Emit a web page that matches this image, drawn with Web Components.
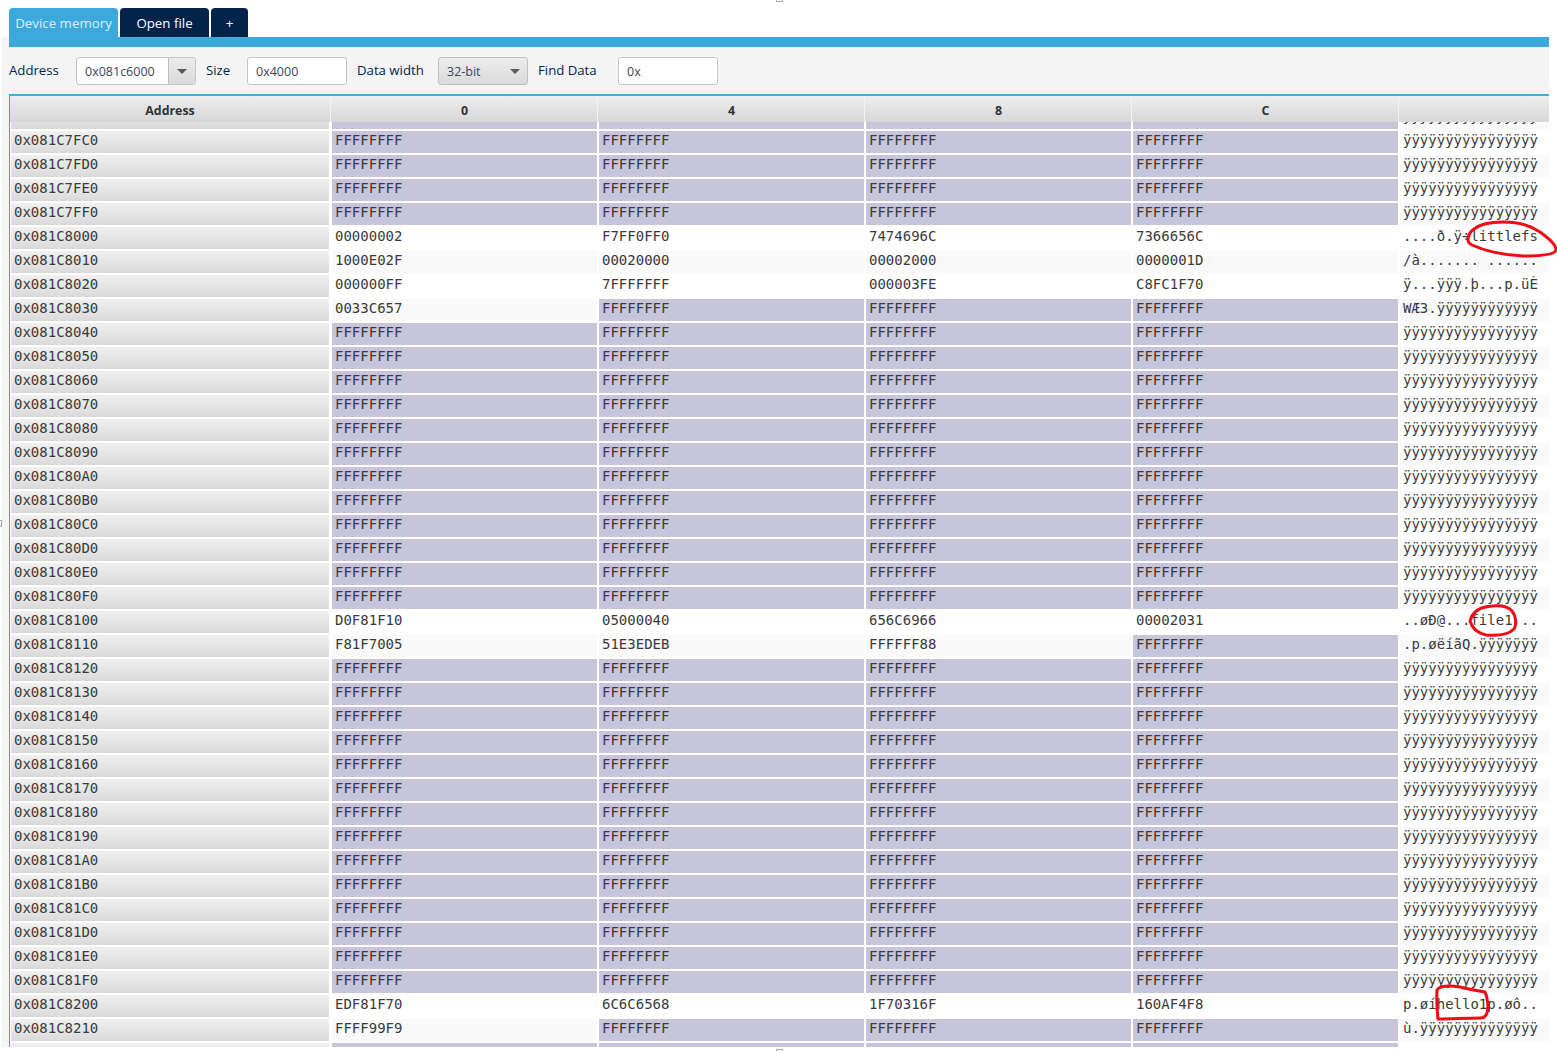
<!DOCTYPE html>
<html lang="en">
<head>
<meta charset="utf-8">
<title>Device memory</title>
<style>
html,body{margin:0;padding:0;background:#fff;height:100%;overflow:hidden}
body{font-family:"Open Sans","Noto Sans",sans-serif;color:#03234b}
</style>
</head>
<body>
<memory-app>
  <tab-bar>
    <tab-item active w="109">Device memory</tab-item>
    <tab-item w="89">Open file</tab-item>
    <tab-item w="37">+</tab-item>
  </tab-bar>
  <tool-bar>
    <tool-label w="67">Address</tool-label>
    <combo-field value="0x081c6000"></combo-field>
    <tool-label w="41">Size</tool-label>
    <text-field value="0x4000"></text-field>
    <tool-label w="81">Data width</tool-label>
    <select-field value="32-bit"></select-field>
    <tool-label w="80">Find Data</tool-label>
    <text-field value="0x"></text-field>
  </tool-bar>
  <memory-table></memory-table>
</memory-app>
<script>
const tpl = (css, html) => { const t = document.createElement('template'); t.innerHTML = `<style>${css}</style>${html}`; return t; };
const define = (name, t, setup) => customElements.define(name, class extends HTMLElement {
  constructor(){ super(); this.attachShadow({mode:'open'}).appendChild(t.content.cloneNode(true)); }
  connectedCallback(){ if (setup) setup(this, this.shadowRoot); }
});

define('memory-app', tpl(`
  :host{display:block;position:relative;width:1557px;height:1051px;overflow:hidden;background:#fff}
  .panel{display:flex;flex-direction:column;margin:8px 8px 0 2px;height:1039px}
  .marks{position:absolute;left:0;top:0;pointer-events:none}
  .h{position:absolute;box-sizing:border-box;border:1px solid #a9a9a9;background:#fff}
`, `
  <div class="panel"><slot></slot></div>
  <div class="h" style="left:776px;top:-5px;width:7px;height:7px"></div>
  <div class="h" style="left:776px;top:1049px;width:7px;height:7px"></div>
  <div class="h" style="left:-5px;top:520px;width:7px;height:7px"></div>
  <svg class="marks" width="1557" height="1051" fill="none" stroke="#f20a14" stroke-width="3" stroke-linecap="round" stroke-linejoin="round">
    <path d="M1468 240C1468 235 1471 231 1474 229C1479 225 1490 222 1503 222C1515 222 1530 225 1540 232C1548 238 1556 244 1556 250C1555 255 1540 256 1523 256C1505 255 1485 251 1472 245C1470 244 1468 242 1468 240Z"/>
    <path d="M1470 621C1472 613 1478 608 1488 606.500C1498 605 1508 606 1512 611C1516 616 1517 624 1514 629C1509 634 1498 636 1486 635C1477 633 1472 628 1470 621Z"/>
    <path d="M1437 990C1440 986 1450 985.500 1460 987C1468 989 1479 991 1485 992C1488 998 1488.500 1008 1487 1013C1486 1016 1483 1018 1480 1018C1465 1018.500 1450 1018.500 1438 1019C1437 1010 1436.500 1000 1437 990Z"/>
  </svg>
`));

define('tab-bar', tpl(`
  :host{display:flex;gap:2px;height:29px;padding-left:7px;flex:none}
`, `<slot></slot>`));

define('tab-item', tpl(`
  :host{display:flex;align-items:center;justify-content:center;box-sizing:border-box;height:29px;border-radius:4px 4px 0 0;padding-top:1px;
    background:#03234b;color:#fff;font-size:13.3px;line-height:28px;white-space:nowrap}
  :host([active]){background:#3ca8dc;color:#d9f0fb}
`, `<slot></slot>`), (el) => { el.style.width = el.getAttribute('w') + 'px'; });

define('tool-bar', tpl(`
  :host{display:block;flex:none;background:#f4f4f4;height:57px}
  .stripe{height:10px;margin-left:7px;background:#3ca8dc}
  .items{display:flex;align-items:flex-start;padding:10px 0 0 7px}
  ::slotted(*){flex:none}
`, `<div class="stripe"></div><div class="items"><slot></slot></div>`));

define('tool-label', tpl(`
  :host{display:block;box-sizing:border-box;height:28px;font-size:13.2px;line-height:26px;color:#03234b;white-space:nowrap}
`, `<slot></slot>`), (el) => { el.style.width = el.getAttribute('w') + 'px'; });

const fieldCss = `
  .v{font-size:12.5px;line-height:28px;color:#3a4658;white-space:nowrap}
  .arrow{width:0;height:0;border-left:5px solid transparent;border-right:5px solid transparent;border-top:5px solid #5a5a5a}
`;
define('text-field', tpl(`
  :host{display:block;box-sizing:border-box;width:100px;height:28px;margin-right:10px;background:#fff;border:1px solid #c4c4c4;border-radius:3px;padding-left:8px}
  ${fieldCss}
  .v{line-height:27px}
`, `<div class="v"></div>`), (el, r) => { r.querySelector('.v').textContent = el.getAttribute('value'); });

define('combo-field', tpl(`
  :host{display:flex;box-sizing:border-box;width:120px;height:28px;margin-right:10px;background:#fff;border:1px solid #c4c4c4;border-radius:3px;overflow:hidden}
  ${fieldCss}
  .v{flex:1;padding-left:8px;line-height:27px}
  .b{flex:none;width:26px;display:flex;align-items:center;justify-content:center;border-left:1px solid #bdbdbd;background:linear-gradient(#ececec,#d9d9d9)}
`, `<div class="v"></div><div class="b"><div class="arrow"></div></div>`), (el, r) => { r.querySelector('.v').textContent = el.getAttribute('value'); });

define('select-field', tpl(`
  :host{display:flex;align-items:center;justify-content:space-between;box-sizing:border-box;width:90px;height:28px;margin-right:10px;
    background:linear-gradient(#ececec,#dadada);border:1px solid #c0c0c0;border-radius:3px;padding:0 7px 0 8px}
  ${fieldCss}
  .v{line-height:27px}
`, `<div class="v"></div><div class="arrow"></div>`), (el, r) => { r.querySelector('.v').textContent = el.getAttribute('value'); });

const F = 'FFFFFFFF';
const special = {
  '081C8000':['00000002','F7FF0FF0','7474696C','7366656C'],
  '081C8010':['1000E02F','00020000','00002000','0000001D'],
  '081C8020':['000000FF','7FFFFFFF','000003FE','C8FC1F70'],
  '081C8030':['0033C657',F,F,F],
  '081C8100':['D0F81F10','05000040','656C6966','00002031'],
  '081C8110':['F81F7005','51E3EDEB','FFFFFF88',F],
  '081C8200':['EDF81F70','6C6C6568','1F70316F','160AF4F8'],
  '081C8210':['FFFF99F9',F,F,F],
};
const ascii = words => words.map(w => {
  let s = '';
  for (let i = 6; i >= 0; i -= 2) {
    const b = parseInt(w.substr(i, 2), 16);
    s += (b >= 0x20 && b < 0x7f) || b >= 0xa1 ? String.fromCharCode(b) : '.';
  }
  return s;
}).join('');

define('memory-table', tpl(`
  :host{display:flex;flex-direction:column;flex:1;min-height:0;background:#f4f4f4;padding-left:7px}
  .t{flex:1;min-height:0;display:flex;flex-direction:column;background:#fff;border-top:2px solid #3fade0;border-left:1px solid #2ea6de;overflow:hidden}
  .grid{display:grid;grid-template-columns:319px 265px 265px 265px 265px 149px;column-gap:2px}
  .head{flex:none;height:26px;background:linear-gradient(#ededed,#d7d7d7)}
  .head div{font:700 12.4px/30px "Open Sans","Noto Sans",sans-serif;color:#333;text-align:center;border-right:1px solid #f2f2f2;margin-right:-2px;height:26px;padding-left:1px;box-sizing:border-box}
  .head div:first-child{padding-left:0}
  .head div:last-child{border:0;margin:0}
  .view{flex:1;min-height:0;overflow:hidden}
  .rows{margin-top:-15px;padding-left:1px;display:flex;flex-direction:column;gap:2px}
  .row div{height:22px;box-sizing:border-box;padding-left:3px;font:14px/18px "DejaVu Sans Mono","Liberation Mono",monospace;color:#3a3a3a;white-space:pre;overflow:hidden;background:#fff}
  .row.alt div{background:#f9f9f9}
  .row div.a{background:linear-gradient(#f0f0f0,#d9d9d9);border-right:1px solid #fff}
  .row div.f{background:#c6c5d9}
  .row:last-child div{color:transparent}
`, `<div class="t"><div class="grid head"><div>Address</div><div>0</div><div>4</div><div>8</div><div>C</div><div></div></div><div class="view"><div class="rows"></div></div></div>`),
(el, r) => {
  const rows = r.querySelector('.rows');
  if (rows.childElementCount) return;
  let idx = -1;
  for (let a = 0x081C7FB0; a <= 0x081C8220; a += 16) {
    const hex = a.toString(16).toUpperCase().padStart(8, '0');
    const words = special[hex] || [F, F, F, F];
    const row = document.createElement('div');
    row.className = 'grid row' + (idx % 2 ? ' alt' : '');
    const add = (text, cls) => { const c = document.createElement('div'); c.textContent = text; if (cls) c.className = cls; row.appendChild(c); };
    add('0x' + hex, 'a');
    words.forEach(w => add(w, w === F ? 'f' : ''));
    add(ascii(words));
    rows.appendChild(row);
    idx++;
  }
});
</script>
</body>
</html>
